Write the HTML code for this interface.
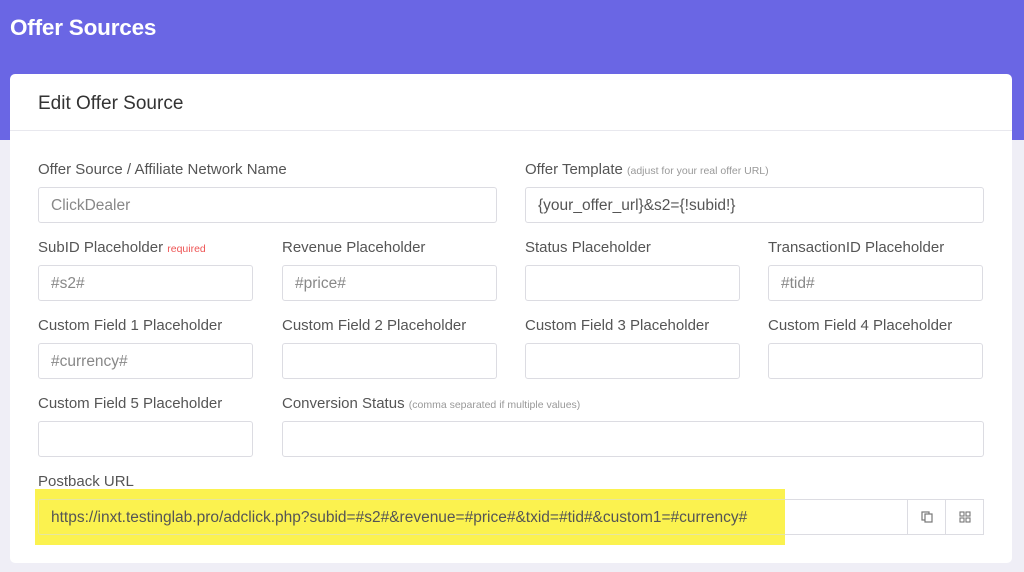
<!DOCTYPE html>
<html><head><meta charset="utf-8"><style>
*{box-sizing:border-box;margin:0;padding:0}
body{width:1024px;height:572px;overflow:hidden;background:#efeef6;font-family:"Liberation Sans",sans-serif;position:relative}
.hdr{position:absolute;left:0;top:0;width:1024px;height:140px;background:#6a66e4}
.hdr h1{position:absolute;left:10px;top:15px;color:#fff;font-size:22.5px;font-weight:bold;letter-spacing:-0.2px}
.card{position:absolute;left:10px;top:74px;width:1002px;height:489px;background:#fff;border-radius:5px}
.ch{height:57px;border-bottom:1px solid #e8e8ee;padding:19px 28px;font-size:19px;color:#333}
.l{position:absolute;font-size:15px;color:#555}
.l small{font-size:10.5px;color:#999}
.l small.r{color:#e55}
.i{position:absolute;height:36px;border:1px solid #dcdce2;border-radius:3px;font-size:15.5px;color:#888;padding:9px 12px;white-space:nowrap}
.hl{position:absolute;left:35px;top:489px;width:750px;height:56px;background:#fbf24f}
.btn{position:absolute;top:499px;width:39px;height:36px;border:1px solid #dcdce2;background:#fff}
</style></head><body>
<div class="hdr"><h1>Offer Sources</h1></div>
<div class="card"><div class="ch">Edit Offer Source</div></div>
<div class="l" style="left:38px;top:161px">Offer Source / Affiliate Network Name</div>
<div class="i" style="left:38px;top:187px;width:459px">ClickDealer</div>
<div class="l" style="left:525px;top:161px">Offer Template <small>(adjust for your real offer URL)</small></div>
<div class="i" style="left:525px;top:187px;width:459px;color:#555">{your_offer_url}&amp;s2={!subid!}</div>

<div class="l" style="left:38px;top:239px">SubID Placeholder <small class="r">required</small></div>
<div class="i" style="left:38px;top:265px;width:215px">#s2#</div>
<div class="l" style="left:282px;top:239px">Revenue Placeholder</div>
<div class="i" style="left:282px;top:265px;width:215px">#price#</div>
<div class="l" style="left:525px;top:239px">Status Placeholder</div>
<div class="i" style="left:525px;top:265px;width:215px"></div>
<div class="l" style="left:768px;top:239px">TransactionID Placeholder</div>
<div class="i" style="left:768px;top:265px;width:215px">#tid#</div>

<div class="l" style="left:38px;top:317px">Custom Field 1 Placeholder</div>
<div class="i" style="left:38px;top:343px;width:215px">#currency#</div>
<div class="l" style="left:282px;top:317px">Custom Field 2 Placeholder</div>
<div class="i" style="left:282px;top:343px;width:215px"></div>
<div class="l" style="left:525px;top:317px">Custom Field 3 Placeholder</div>
<div class="i" style="left:525px;top:343px;width:215px"></div>
<div class="l" style="left:768px;top:317px">Custom Field 4 Placeholder</div>
<div class="i" style="left:768px;top:343px;width:215px"></div>

<div class="l" style="left:38px;top:395px">Custom Field 5 Placeholder</div>
<div class="i" style="left:38px;top:421px;width:215px"></div>
<div class="l" style="left:282px;top:395px">Conversion Status <small>(comma separated if multiple values)</small></div>
<div class="i" style="left:282px;top:421px;width:702px"></div>

<div class="l" style="left:38px;top:473px">Postback URL</div>
<div class="hl"></div>
<div class="i" style="left:38px;top:499px;width:870px;color:#555;border-color:#e6e6a0;background:transparent">https://inxt.testinglab.pro/adclick.php?subid=#s2#&amp;revenue=#price#&amp;txid=#tid#&amp;custom1=#currency#</div>
<div class="i" style="left:785px;top:499px;width:123px;border-left:none;border-radius:0;background:#fff"></div>
<div class="btn" style="left:907px"><svg width="37" height="34" viewBox="0 0 37 34"><rect x="14" y="12" width="7" height="8" fill="none" stroke="#777" stroke-width="1.2"/><rect x="17" y="14" width="7" height="8" fill="#fff" stroke="#777" stroke-width="1.2"/></svg></div>
<div class="btn" style="left:945px;width:39px"><svg width="37" height="34" viewBox="0 0 37 34"><g fill="none" stroke="#777" stroke-width="1.1"><rect x="14" y="12" width="4" height="4"/><rect x="20" y="12" width="4" height="4"/><rect x="14" y="18" width="4" height="4"/><rect x="20" y="18" width="4" height="4"/></g></svg></div>
</body></html>
